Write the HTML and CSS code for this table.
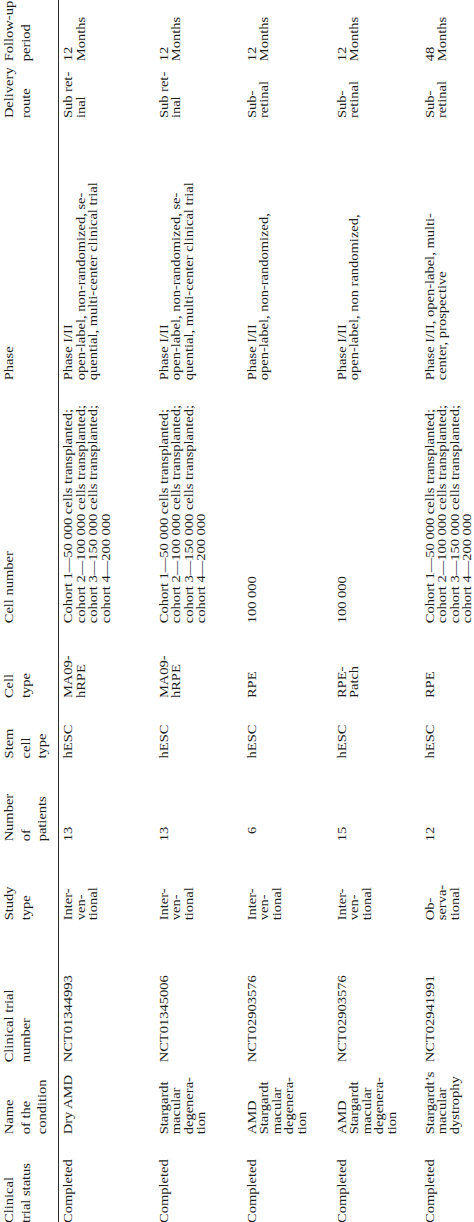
FILE: index.html
```html
<!DOCTYPE html>
<html lang="en">
<head>
<meta charset="utf-8">
<title>Clinical trials table</title>
<link rel="stylesheet" href="styles.css">
</head>
<body>
<div class="page">
  <div class="sheet">
    <table class="trials">
      <colgroup>
        <col class="c1"><col class="c2"><col class="c3"><col class="c4"><col class="c5"><col class="c6"><col class="c7"><col class="c8"><col class="c9"><col class="c10"><col class="c11">
      </colgroup>
      <thead>
        <tr>
          <th>Clinical<br>trial status</th>
          <th>Name<br>of the<br>condition</th>
          <th>Clinical trial<br>number</th>
          <th>Study<br>type</th>
          <th>Number<br>of<br>patients</th>
          <th>Stem<br>cell<br>type</th>
          <th>Cell<br>type</th>
          <th>Cell number</th>
          <th>Phase</th>
          <th>Delivery<br>route</th>
          <th>Follow-up<br>period</th>
        </tr>
      </thead>
      <tbody>
        <tr class="r1">
          <td>Completed</td>
          <td>Dry AMD</td>
          <td>NCT01344993</td>
          <td>Inter-<br>ven-<br>tional</td>
          <td>13</td>
          <td>hESC</td>
          <td>MA09-<br>hRPE</td>
          <td>Cohort 1—50 000 cells transplanted;<br>cohort 2—100 000 cells transplanted;<br>cohort 3—150 000 cells transplanted;<br>cohort 4—200 000</td>
          <td>Phase I/II<br>open-label, non-randomized, se-<br>quential, multi-center clinical trial</td>
          <td>Sub ret-<br>inal</td>
          <td>12<br>Months</td>
        </tr>
        <tr class="r2">
          <td>Completed</td>
          <td>Stargardt<br>macular<br>degenera-<br>tion</td>
          <td>NCT01345006</td>
          <td>Inter-<br>ven-<br>tional</td>
          <td>13</td>
          <td>hESC</td>
          <td>MA09-<br>hRPE</td>
          <td>Cohort 1—50 000 cells transplanted;<br>cohort 2—100 000 cells transplanted;<br>cohort 3—150 000 cells transplanted;<br>cohort 4—200 000</td>
          <td>Phase I/II<br>open-label, non-randomized, se-<br>quential, multi-center clinical trial</td>
          <td>Sub ret-<br>inal</td>
          <td>12<br>Months</td>
        </tr>
        <tr class="r3">
          <td>Completed</td>
          <td>AMD<br>Stargardt<br>macular<br>degenera-<br>tion</td>
          <td>NCT02903576</td>
          <td>Inter-<br>ven-<br>tional</td>
          <td><span class="units">6</span></td>
          <td>hESC</td>
          <td>RPE</td>
          <td>100 000</td>
          <td>Phase I/II<br>open-label, non-randomized,</td>
          <td>Sub-<br>retinal</td>
          <td>12<br>Months</td>
        </tr>
        <tr class="r4">
          <td>Completed</td>
          <td>AMD<br>Stargardt<br>macular<br>degenera-<br>tion</td>
          <td>NCT02903576</td>
          <td>Inter-<br>ven-<br>tional</td>
          <td>15</td>
          <td>hESC</td>
          <td>RPE-<br>Patch</td>
          <td>100 000</td>
          <td>Phase I/II<br>open-label, non randomized,</td>
          <td>Sub-<br>retinal</td>
          <td>12<br>Months</td>
        </tr>
        <tr class="r5">
          <td>Completed</td>
          <td>Stargardt’s<br>macular<br>dystrophy</td>
          <td>NCT02941991</td>
          <td>Ob-<br>serva-<br>tional</td>
          <td>12</td>
          <td>hESC</td>
          <td>RPE</td>
          <td>Cohort 1—50 000 cells transplanted;<br>cohort 2—100 000 cells transplanted;<br>cohort 3—150 000 cells transplanted;<br>cohort 4—200 000</td>
          <td>Phase I/II, open-label, multi-<br>center, prospective</td>
          <td>Sub-<br>retinal</td>
          <td>48<br>Months</td>
        </tr>
      </tbody>
    </table>
  </div>
</div>
</body>
</html>
```

FILE: styles.css
```css
html, body {
  margin: 0;
  padding: 0;
  background: #ffffff;
}

.page {
  position: relative;
  width: 474px;
  height: 1222px;
  overflow: hidden;
  background: #ffffff;
}

/* the table is printed sideways: its top edge runs down the left side.
   The print is slightly stretched along the reading direction. */
.sheet {
  position: absolute;
  left: 0;
  top: 0;
  width: 1071px;
  height: 474px;
  transform-origin: 0 0;
  transform: translate(0, 1223px) rotate(-90deg) scale(1.16, 1);
}

.trials {
  border-collapse: collapse;
  table-layout: fixed;
  width: 1071px;
  font-family: "Liberation Serif", "Times New Roman", serif;
  font-size: 12.5px;
  color: #1c1c1c;
}

.trials th,
.trials td {
  padding: 0;
  text-align: left;
  vertical-align: top;
  white-space: nowrap;
}

.trials th {
  font-weight: normal;
  line-height: 16.5px;
  padding-top: 1px;
  height: 57px;
  border-bottom: 1.5px solid #2a2a2a;
}

.trials td {
  line-height: 12.5px;
  padding-top: 3px;
}

.units {
  padding-left: 0.5em;
}

.c1 { width: 76.5px; }
.c2 { width: 62px; }
.c3 { width: 122.5px; }
.c4 { width: 68px; }
.c5 { width: 71.5px; }
.c6 { width: 52px; }
.c7 { width: 64.5px; }
.c8 { width: 209.5px; }
.c9 { width: 226px; }
.c10 { width: 49px; }
.c11 { width: 69.5px; }

.r1 { height: 96px; }
.r2 { height: 88px; }
.r3 { height: 90px; }
.r4 { height: 88px; }
.r5 { height: 60px; }
```
